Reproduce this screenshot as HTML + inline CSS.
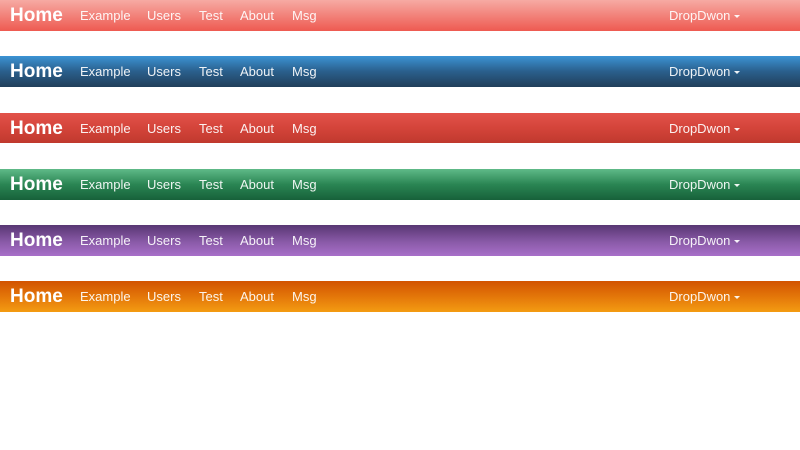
<!DOCTYPE html>
<html><head><meta charset="utf-8"><style>
body{margin:0;width:800px;height:450px;background:#fff;font-family:"Liberation Sans",sans-serif;position:relative;overflow:hidden}
.bar{position:absolute;left:0;width:800px;height:31px;color:#fff}
.bar span{position:absolute;top:8px;font-size:13px;line-height:16px;opacity:.92}
.bar .h{top:5px;font-size:19px;font-weight:bold;line-height:22px;left:10px;opacity:1}
.car{display:inline-block;width:0;height:0;border-left:3px solid transparent;border-right:3px solid transparent;border-top:3px solid #fff;vertical-align:middle;margin-left:4px}
</style></head><body>
<div class="bar" style="top:0;background:linear-gradient(#f6aaa3,#ee5a51)"><span class="h">Home</span><span style="left:80px">Example</span><span style="left:147px">Users</span><span style="left:199px">Test</span><span style="left:240px">About</span><span style="left:292px">Msg</span><span style="left:669px">DropDwon<i class="car"></i></span></div>
<div class="bar" style="top:56px;background:linear-gradient(#3c93d4,#2a5f8c 50%,#213f5a)"><span class="h">Home</span><span style="left:80px">Example</span><span style="left:147px">Users</span><span style="left:199px">Test</span><span style="left:240px">About</span><span style="left:292px">Msg</span><span style="left:669px">DropDwon<i class="car"></i></span></div>
<div class="bar" style="top:113px;height:30px;background:linear-gradient(#e2534a,#d4443a 50%,#c0392e)"><span class="h">Home</span><span style="left:80px">Example</span><span style="left:147px">Users</span><span style="left:199px">Test</span><span style="left:240px">About</span><span style="left:292px">Msg</span><span style="left:669px">DropDwon<i class="car"></i></span></div>
<div class="bar" style="top:169px;background:linear-gradient(#5fba88,#2a8553 50%,#17613a)"><span class="h">Home</span><span style="left:80px">Example</span><span style="left:147px">Users</span><span style="left:199px">Test</span><span style="left:240px">About</span><span style="left:292px">Msg</span><span style="left:669px">DropDwon<i class="car"></i></span></div>
<div class="bar" style="top:225px;background:linear-gradient(#583773,#8a5aa8 55%,#a86fc9)"><span class="h">Home</span><span style="left:80px">Example</span><span style="left:147px">Users</span><span style="left:199px">Test</span><span style="left:240px">About</span><span style="left:292px">Msg</span><span style="left:669px">DropDwon<i class="car"></i></span></div>
<div class="bar" style="top:281px;background:linear-gradient(#d25300,#e57a0a 55%,#f39c12)"><span class="h">Home</span><span style="left:80px">Example</span><span style="left:147px">Users</span><span style="left:199px">Test</span><span style="left:240px">About</span><span style="left:292px">Msg</span><span style="left:669px">DropDwon<i class="car"></i></span></div>
</body></html>
